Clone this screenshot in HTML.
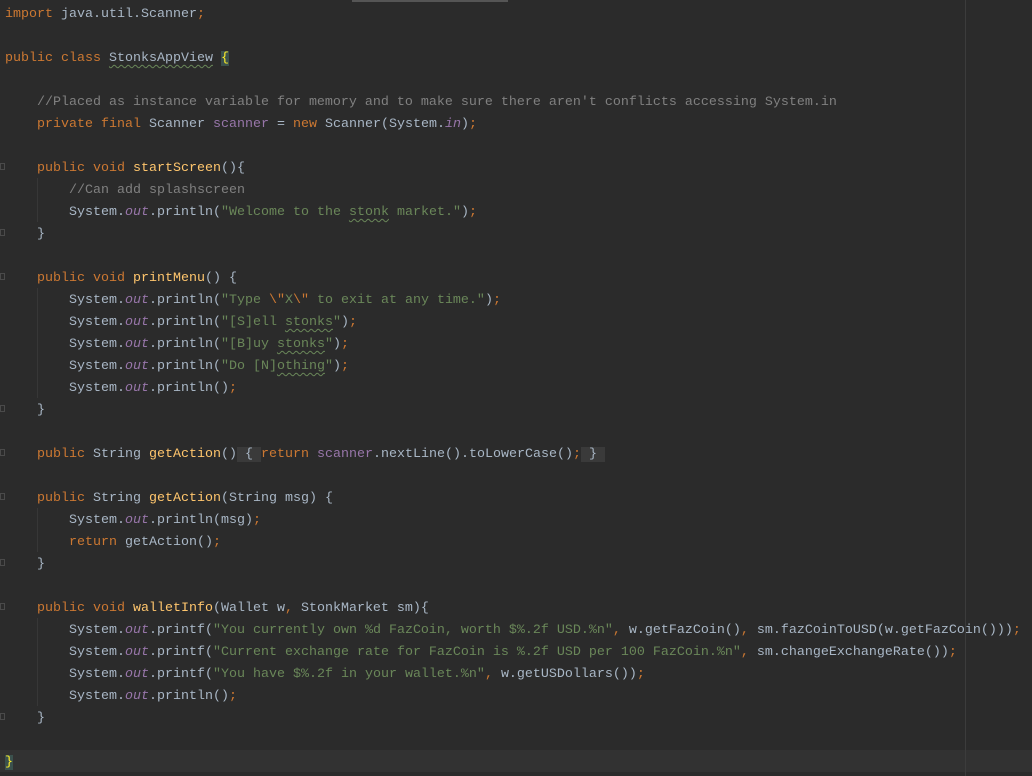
<!DOCTYPE html>
<html><head><meta charset="utf-8"><style>
html,body{margin:0;padding:0;width:1032px;height:776px;overflow:hidden;background:#2b2b2b;}
#ed{position:absolute;left:0;top:2px;width:1032px;}
.l{height:20px;padding-top:2px;line-height:22px;font-family:"Liberation Mono",monospace;font-size:13.33px;color:#a9b7c6;white-space:pre;padding-left:5px;position:relative;}
.k{color:#cc7832}.m{color:#ffc66d}.s{color:#6a8759}.c{color:#808080}.f{color:#9876aa}.i{color:#9876aa;font-style:italic}
.cur{background:#323232}
.w{text-decoration:underline wavy #6a8759;text-decoration-thickness:1px;text-underline-offset:3px}
.bm{background:#3b514d;color:#ffef28}
.fold{background:#3a3a3a}
#margin{position:absolute;left:965px;top:0;width:1px;height:776px;background:#3c3c3c}
#top{position:absolute;left:352px;top:0;width:156px;height:2px;background:#555}
.g{position:absolute;left:0;width:5px;height:7px;border:1px solid #4a4a4a;box-sizing:border-box}
.ig{position:absolute;left:37px;width:1px;background:#373737}
</style></head><body>
<div id="top"></div>
<div class="g" style="top:163px"></div><div class="g" style="top:229px"></div>
<div class="g" style="top:273px"></div><div class="g" style="top:405px"></div>
<div class="g" style="top:449px"></div>
<div class="g" style="top:493px"></div><div class="g" style="top:559px"></div>
<div class="g" style="top:603px"></div><div class="g" style="top:713px"></div>
<div class="ig" style="top:178px;height:44px"></div>
<div class="ig" style="top:288px;height:110px"></div>
<div class="ig" style="top:508px;height:44px"></div>
<div class="ig" style="top:618px;height:88px"></div>
<div id="ed">
<div class="l"><span class="k">import </span>java.util.Scanner<span class="k">;</span></div>
<div class="l"> </div>
<div class="l"><span class="k">public class </span><span class="w">StonksAppView</span> <span class="bm">{</span></div>
<div class="l"> </div>
<div class="l">    <span class="c">//Placed as instance variable for memory and to make sure there aren't conflicts accessing System.in</span></div>
<div class="l">    <span class="k">private final </span>Scanner <span class="f">scanner </span>= <span class="k">new </span>Scanner(System.<span class="i">in</span>)<span class="k">;</span></div>
<div class="l"> </div>
<div class="l">    <span class="k">public void </span><span class="m">startScreen</span>(){</div>
<div class="l">        <span class="c">//Can add splashscreen</span></div>
<div class="l">        System.<span class="i">out</span>.println(<span class="s">"Welcome to the <span class="w">stonk</span> market."</span>)<span class="k">;</span></div>
<div class="l">    }</div>
<div class="l"> </div>
<div class="l">    <span class="k">public void </span><span class="m">printMenu</span>() {</div>
<div class="l">        System.<span class="i">out</span>.println(<span class="s">"Type </span><span class="k">\"</span><span class="s">X</span><span class="k">\"</span><span class="s"> to exit at any time."</span>)<span class="k">;</span></div>
<div class="l">        System.<span class="i">out</span>.println(<span class="s">"[S]ell <span class="w">stonks</span>"</span>)<span class="k">;</span></div>
<div class="l">        System.<span class="i">out</span>.println(<span class="s">"[B]uy <span class="w">stonks</span>"</span>)<span class="k">;</span></div>
<div class="l">        System.<span class="i">out</span>.println(<span class="s">"Do [N]<span class="w">othing</span>"</span>)<span class="k">;</span></div>
<div class="l">        System.<span class="i">out</span>.println()<span class="k">;</span></div>
<div class="l">    }</div>
<div class="l"> </div>
<div class="l">    <span class="k">public </span>String <span class="m">getAction</span>()<span class="fold"> { </span><span class="k">return </span><span class="f">scanner</span>.nextLine().toLowerCase()<span class="k">;</span><span class="fold"> } </span></div>
<div class="l"> </div>
<div class="l">    <span class="k">public </span>String <span class="m">getAction</span>(String msg) {</div>
<div class="l">        System.<span class="i">out</span>.println(msg)<span class="k">;</span></div>
<div class="l">        <span class="k">return </span>getAction()<span class="k">;</span></div>
<div class="l">    }</div>
<div class="l"> </div>
<div class="l">    <span class="k">public void </span><span class="m">walletInfo</span>(Wallet w<span class="k">, </span>StonkMarket sm){</div>
<div class="l">        System.<span class="i">out</span>.printf(<span class="s">"You currently own %d FazCoin, worth $%.2f USD.%n"</span><span class="k">, </span>w.getFazCoin()<span class="k">, </span>sm.fazCoinToUSD(w.getFazCoin()))<span class="k">;</span></div>
<div class="l">        System.<span class="i">out</span>.printf(<span class="s">"Current exchange rate for FazCoin is %.2f USD per 100 FazCoin.%n"</span><span class="k">, </span>sm.changeExchangeRate())<span class="k">;</span></div>
<div class="l">        System.<span class="i">out</span>.printf(<span class="s">"You have $%.2f in your wallet.%n"</span><span class="k">, </span>w.getUSDollars())<span class="k">;</span></div>
<div class="l">        System.<span class="i">out</span>.println()<span class="k">;</span></div>
<div class="l">    }</div>
<div class="l"> </div>
<div class="l cur"><span class="bm">}</span></div>
</div>
<div id="margin"></div>
</body></html>
